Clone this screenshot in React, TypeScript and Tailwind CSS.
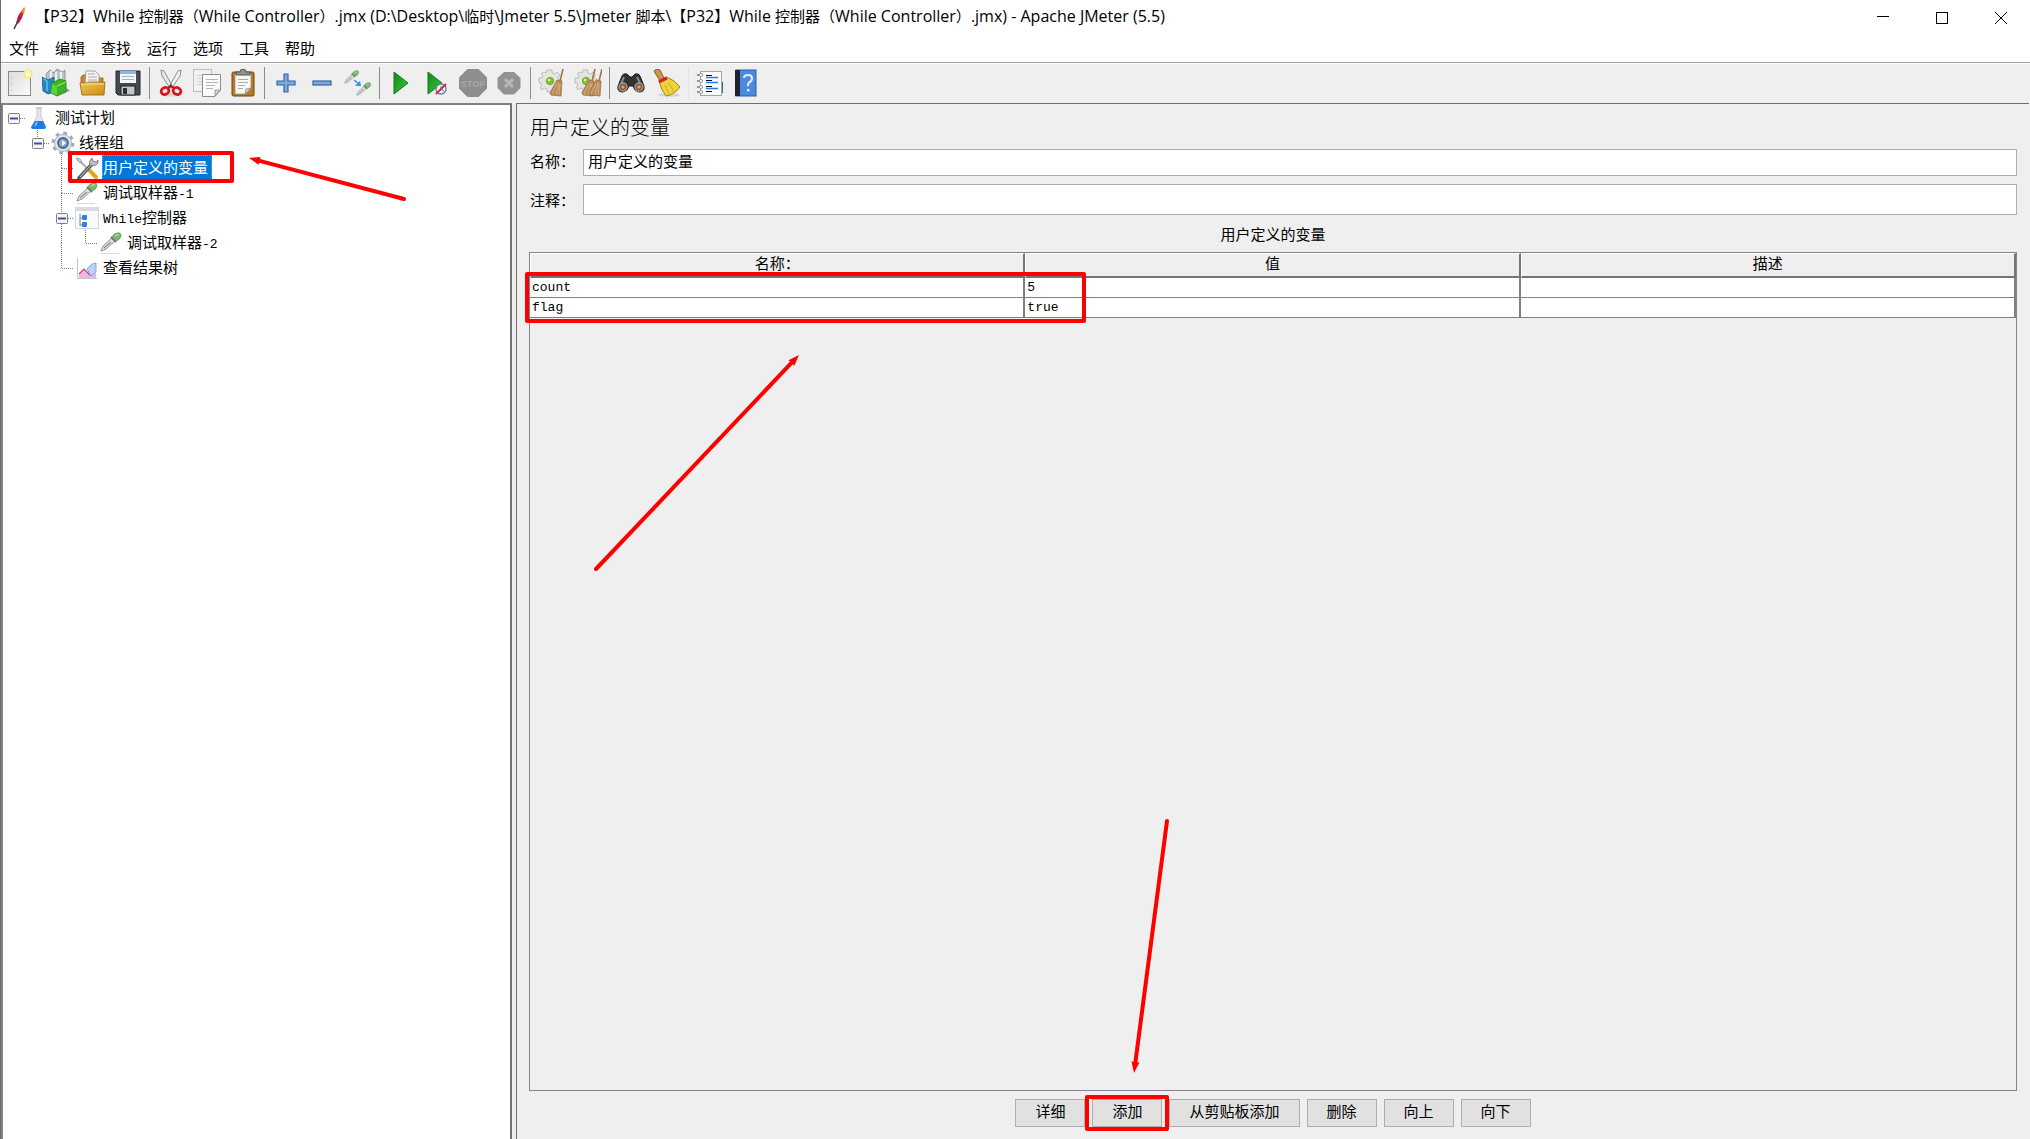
import type { ReactNode } from 'react';

const menus = ['文件', '编辑', '查找', '运行', '选项', '工具', '帮助'];

const mono = "font-['Liberation_Mono','Noto_Sans_CJK_SC',monospace]";

function Svg({ children, size = 28 }: { children: ReactNode; size?: number }) {
  return (
    <svg width={size} height={size} viewBox={`0 0 ${size} ${size}`} aria-hidden="true" className="shrink-0">
      {children}
    </svg>
  );
}

function Gradient({ id, from, to }: { id: string; from: string; to: string }) {
  return (
    <linearGradient id={id} x1="0" y1="0" x2="1" y2="1">
      <stop offset="0" stopColor={from} />
      <stop offset="1" stopColor={to} />
    </linearGradient>
  );
}

function Dropper({ x, y, scale = 1 }: { x: number; y: number; scale?: number }) {
  return (
    <g transform={`translate(${x} ${y}) scale(${scale})`}>
      <path d="M1 19 L3 14 L12 6 L15 9 L6 17 Z" fill="#e2e5e2" stroke="#8d918d" />
      <path d="M4 16 L11 10" stroke="#8a8e8a" strokeWidth="1.2" />
      <path d="M11 5 L16 10" stroke="#6d776d" strokeWidth="2" />
      <path d="M12 5 Q13 2 17 1 Q21 0 21 4 Q20 8 16 9 Z" fill="#79b56c" stroke="#5f9a56" strokeWidth=".8" />
      <path d="M15 4 Q17 2 19 3" fill="none" stroke="#c4e6ba" />
    </g>
  );
}

function BroomHead({ x }: { x: number }) {
  return (
    <g transform={`translate(${x} 0)`}>
      <path d="M12 0 L9 12" stroke="#a0713f" strokeWidth="1.6" />
      <path d="M6 11 L11 12 L10 27 L0 26 Q-2 24 0 22 Z" fill="#b98c5a" stroke="#9a7044" strokeWidth=".8" />
      <path d="M6 14 L1 25 M8 14 L5 26 M9 15 L8 26" stroke="#dcb888" strokeWidth=".8" />
    </g>
  );
}

function GearBody() {
  return (
    <g>
      <path
        d="M9 1h5v3l3 1 2-2 3 3-2 2 1 2h2v5h-3l-1 3 2 2-3 2-2-2-2 1v2H9v-3l-3-1-2 2-2-3 2-2-1-2H1v-5h3l1-2-2-2 3-2 2 1z"
        fill="#e3e5e3"
        stroke="#b0b3b0"
        strokeWidth=".8"
      />
      <circle cx="12" cy="12" r="3.6" fill="#86c42f" stroke="#6fa323" />
      <circle cx="11" cy="11" r="1.3" fill="#d3f29b" />
    </g>
  );
}

const icons = {
  new: (
    <Svg>
      <rect x="2.5" y="2.5" width="22" height="24" fill="url(#paper)" stroke="#8b8b88" />
      <path d="M5 9h1M5 15h1M5 21h1" stroke="#aaa" />
      <circle cx="22" cy="5" r="4" fill="#fff7a8" stroke="#f2e27a" strokeWidth="1.2" />
      <circle cx="22" cy="5" r="1.6" fill="#fff" />
    </Svg>
  ),
  templates: (
    <Svg>
      <path d="M4 5 L8 1 L12 4 L15 0 L20 3 L23 1 V16 H5 Z" fill="#bcc3c6" stroke="#7f888c" strokeWidth=".8" />
      <path d="M9 2v10M14 3v9M19 3v9" stroke="#eef1f2" strokeWidth="2" />
      <path d="M0 8 L6 11 L12 8 V23 L6 25 L1 22 Z" fill="#2388bd" stroke="#11618f" strokeWidth=".8" />
      <path d="M2 10 L5 12 V22" fill="none" stroke="#6fc6ec" strokeWidth="1.3" />
      <path d="M21 24 L28 22 L25 19 Z" fill="#999" />
      <path d="M10 14 L18 10 L24 12 V23 L15 27 L9 24 Z" fill="#3db223" stroke="#25801a" strokeWidth=".8" />
      <path d="M10 15 L15 17 V26 L9 24 Z" fill="#5fd13d" />
      <path d="M15 17 L24 13" stroke="#a4ef83" />
    </Svg>
  ),
  open: (
    <Svg>
      <path d="M3 8 L5 6 H10 L12 9 H25 V14 H3 Z" fill="#c98a22" stroke="#93600e" strokeWidth=".8" />
      <path d="M8 2 H17 L21 6 V15 H7 Z" fill="#f5f5f5" stroke="#8e8e8e" strokeWidth=".8" />
      <path d="M10 5h7M10 8h9M10 11h9" stroke="#a9a9a9" />
      <path d="M2 14 H9 L11 13 H27 L26 26 H4 Z" fill="url(#folder)" stroke="#a5700f" strokeWidth=".9" />
      <path d="M3 15 H26" stroke="#ffe08a" />
    </Svg>
  ),
  save: (
    <Svg>
      <path d="M2 2 H26 V26 H4 L2 24 Z" fill="#47494f" stroke="#26272b" />
      <rect x="6" y="2" width="16" height="12" fill="#f2f6fa" />
      <rect x="6" y="2" width="16" height="3" fill="#92b4d6" />
      <path d="M8 7.5h12M8 10.5h12" stroke="#9bb6cd" />
      <rect x="7" y="17" width="14" height="9" fill="#c3c6c9" stroke="#1f2023" />
      <rect x="9" y="19" width="4" height="6" fill="#2d2e32" />
    </Svg>
  ),
  cut: (
    <Svg>
      <ellipse cx="14" cy="26" rx="10" ry="1.6" fill="#d6d6d6" />
      <path d="M4 1 L7 2 L16 18 L13 19 L5 7 Z" fill="#e6e8e8" stroke="#8a8d8d" />
      <path d="M24 1 L21 2 L12 18 L15 19 L23 7 Z" fill="#f0f1f1" stroke="#8a8d8d" />
      <circle cx="14" cy="16" r="1" fill="#555" />
      <ellipse cx="8" cy="22" rx="4" ry="3.4" fill="none" stroke="#d9151f" strokeWidth="2.8" transform="rotate(-25 8 22)" />
      <ellipse cx="20" cy="22" rx="4" ry="3.4" fill="none" stroke="#d9151f" strokeWidth="2.8" transform="rotate(25 20 22)" />
      <path d="M11 19 L14 17 L17 19" fill="none" stroke="#b90e17" strokeWidth="2" />
    </Svg>
  ),
  copy: (
    <Svg>
      <rect x=".5" y=".5" width="18" height="22" fill="#f1f1f0" stroke="#bdbdbb" />
      <path d="M4 6.5h12M4 9.5h8M4 12.5h8M4 15.5h8" stroke="#cfcfcd" />
      <path d="M9.5 5.5 H27.5 V21 L22 27.5 H9.5 Z" fill="#fbfbfb" stroke="#8c8c89" />
      <path d="M13 10.5h12M13 13.5h12M13 16.5h9M13 19.5h7" stroke="#b4b4b2" />
      <path d="M27 21 H22 V27 Z" fill="#dadad8" stroke="#8c8c89" strokeWidth=".8" />
    </Svg>
  ),
  paste: (
    <Svg>
      <rect x="3" y="3" width="22" height="24" rx="1.5" fill="#b9781b" stroke="#70450a" />
      <path d="M6 5 H22 V19 L17 25 H6 Z" fill="#f7f7f6" stroke="#94918a" strokeWidth=".8" />
      <path d="M22 19 L17 20 L16 25 Z" fill="#d0d0ce" stroke="#8c8c89" strokeWidth=".8" />
      <path d="M9 10.5h10M9 13.5h10M9 16.5h7M9 19.5h5" stroke="#a9a9a7" />
      <path d="M7 6 V3 H11 Q11 0 14 0 Q17 0 17 3 H21 V6 Z" fill="#92958f" stroke="#555751" />
    </Svg>
  ),
  plus: (
    <Svg>
      <path d="M12 5h4v7h7v4h-7v7h-4v-7H5v-4h7z" fill="#7da9dc" stroke="#3465a4" strokeWidth="1.2" />
    </Svg>
  ),
  minus: (
    <Svg>
      <rect x="5" y="12" width="18" height="4" fill="#7da9dc" stroke="#3465a4" strokeWidth="1.2" />
    </Svg>
  ),
  toggle: (
    <Svg>
      <Dropper x={0} y={1} scale={0.7} />
      <Dropper x={12} y={13} scale={0.7} />
      <path d="M10 11 L15 15" stroke="#3d8cf0" strokeWidth="1.6" />
      <path d="M17 17 L11 17 L16 12 Z" fill="#3d8cf0" />
    </Svg>
  ),
  start: (
    <Svg>
      <path d="M7 3 L21 14 L7 25 Z" fill="url(#play)" stroke="#0d7a17" />
    </Svg>
  ),
  startNoPause: (
    <Svg>
      <path d="M5 3 L19 14 L5 25 Z" fill="url(#play)" stroke="#0d7a17" />
      <circle cx="18" cy="20" r="5" fill="#eef3fb" stroke="#5c7fb5" strokeWidth="1.4" />
      <path d="M18 17v3l3 2" fill="none" stroke="#666" strokeWidth="1" />
      <path d="M13 25 L23 15" stroke="#d9262c" strokeWidth="1.8" />
    </Svg>
  ),
  stop: (
    <Svg>
      <path d="M8.5 0 H19.5 L28 8.5 V19.5 L19.5 28 H8.5 L0 19.5 V8.5 Z" fill="#8e8e8e" />
      <text x="14" y="18" textAnchor="middle" fill="#a8a8a8" fontSize="9" fontWeight="700" className="font-['Liberation_Sans',sans-serif]">
        STOP
      </text>
    </Svg>
  ),
  shutdown: (
    <Svg>
      <path d="M9 3 H19 L25.5 9 V19 L19 25.5 H9 L2.5 19 V9 Z" fill="#929292" />
      <path d="M10 10 L18 18 M18 10 L10 18" stroke="#b8b8b8" strokeWidth="3" />
    </Svg>
  ),
  clear: (
    <Svg>
      <GearBody />
      <BroomHead x={13} />
    </Svg>
  ),
  clearAll: (
    <Svg>
      <GearBody />
      <BroomHead x={9} />
      <BroomHead x={16} />
    </Svg>
  ),
  search: (
    <Svg>
      <path d="M5 7 Q6 4 10 5 L13 8 H15 L18 5 Q22 4 23 7 L27 17 Q28 23 22 23 Q17 22 16 17 H12 Q11 22 6 23 Q0 23 1 17 Z" fill="#303234" stroke="#1c1d1e" />
      <path d="M7 8 L4 15 M20 8 L23 14" stroke="#85898c" strokeWidth="2" />
      <circle cx="6" cy="18" r="4" fill="#8f5a3a" stroke="#9a9a9a" strokeWidth="1.4" />
      <circle cx="22" cy="18" r="4" fill="#8f5a3a" stroke="#9a9a9a" strokeWidth="1.4" />
      <circle cx="6" cy="18" r="1.6" fill="#e0a070" />
      <circle cx="22" cy="18" r="1.6" fill="#e0a070" />
    </Svg>
  ),
  reset: (
    <Svg>
      <ellipse cx="16" cy="26" rx="11" ry="1.6" fill="#d2d2d0" />
      <path d="M1 2 Q3 -1 7 1 L11 9 L7 12 Z" fill="#d2954d" stroke="#8f5a1f" />
      <path d="M6 12 L14 8 Q23 12 27 18 Q21 26 13 27 Q8 21 6 12 Z" fill="#f0d23a" stroke="#a8860f" />
      <path d="M12 16 L16 25 M16 14 L21 23" stroke="#d0ac22" />
      <path d="M6 13 Q9 11 14 9" stroke="#d42222" strokeWidth="3" />
    </Svg>
  ),
  functions: (
    <Svg>
      <rect x="22" y="13" width="5" height="6" fill="#1d63c7" />
      <rect x="22" y="19" width="5" height="5" fill="#218b34" />
      <rect x="4.5" y="2.5" width="21" height="24" fill="#fafafa" stroke="#a5a5a3" />
      <path d="M1 6h6M1 12h6M1 18h6M1 23h6" stroke="#3c3c3c" strokeWidth="1.2" />
      <g fill="#fff" stroke="#888" strokeWidth=".8">
        <circle cx="5" cy="6" r="1.6" />
        <circle cx="5" cy="12" r="1.6" />
        <circle cx="5" cy="18" r="1.6" />
        <circle cx="5" cy="23" r="1.6" />
      </g>
      <path d="M10 6.5h6M10 11.5h6M10 17.5h6M10 22.5h6" stroke="#111" />
      <path d="M10 8.5h12M10 13.5h12M10 19.5h12" stroke="#2a7df0" strokeWidth="1.6" />
    </Svg>
  ),
  help: (
    <Svg>
      <rect x="4" y="1" width="20" height="26" fill="#4a8ae0" stroke="#2c5fa8" />
      <rect x="3" y="1" width="5" height="26" fill="#1d2430" />
      <path d="M12 9 Q12 6 16 6 Q20 6 20 9.5 Q20 12 17 13.5 Q16 14.5 16 17" fill="none" stroke="#e7f0fc" strokeWidth="2" />
      <rect x="15" y="20" width="2.4" height="2.4" fill="#e7f0fc" />
    </Svg>
  ),
};

const toolGroups: { icon: keyof typeof icons; label: string }[][] = [
  [
    { icon: 'new', label: '新建' },
    { icon: 'templates', label: '模板' },
    { icon: 'open', label: '打开' },
    { icon: 'save', label: '保存' },
  ],
  [
    { icon: 'cut', label: '剪切' },
    { icon: 'copy', label: '复制' },
    { icon: 'paste', label: '粘贴' },
  ],
  [
    { icon: 'plus', label: '全部展开' },
    { icon: 'minus', label: '全部折叠' },
    { icon: 'toggle', label: '切换' },
  ],
  [
    { icon: 'start', label: '启动' },
    { icon: 'startNoPause', label: '不停顿开始' },
    { icon: 'stop', label: '停止' },
    { icon: 'shutdown', label: '关闭' },
  ],
  [
    { icon: 'clear', label: '清除' },
    { icon: 'clearAll', label: '清除全部' },
  ],
  [
    { icon: 'search', label: '查找' },
    { icon: 'reset', label: '重置搜索' },
  ],
  [
    { icon: 'functions', label: '函数助手' },
    { icon: 'help', label: '帮助' },
  ],
];

const treeIcons = {
  plan: (
    <Svg size={24}>
      <path d="M10 2h4v8l4 10q0 2-2 2H7q-2 0-2-2l5-10z" fill="#e4e8ec" stroke="#b9bfc5" strokeWidth=".8" />
      <path d="M8 15h8l3 6q0 2-2 2H6q-2 0-2-2z" fill="#1f7be0" />
      <path d="M10 16 L8 20" stroke="#8cc4ff" strokeWidth="1.5" />
      <path d="M9 2h6" stroke="#b3b9bf" />
    </Svg>
  ),
  group: (
    <Svg size={24}>
      <circle cx="12" cy="12" r="10" fill="none" stroke="#a3a9ae" strokeWidth="3" strokeDasharray="3.6 4.25" />
      <circle cx="12" cy="12" r="8.5" fill="#e4e7ea" stroke="#a9aeb3" />
      <circle cx="12" cy="12" r="5" fill="#7fa6d4" stroke="#46658c" strokeWidth="1.8" />
      <path d="M11 9 L15 12 L11 15 Z" fill="#fff" />
    </Svg>
  ),
  vars: (
    <Svg size={24}>
      <path d="M2 3 L9 9 L13 14" stroke="#a9adb0" strokeWidth="2" fill="none" />
      <path d="M1 2 L5 3 L7 6 L4 6 Z" fill="#d9dcde" stroke="#8b8f92" strokeWidth=".8" />
      <path d="M14 14 L21 21" stroke="#e0a91a" strokeWidth="4" strokeLinecap="round" />
      <path d="M4 22 L17 8" stroke="#55595c" strokeWidth="3.6" strokeLinecap="round" />
      <path d="M15 9 Q13 5 17 2 L18 5 L21 6 L23 4 Q24 9 18 10 Z" fill="#b9bdc0" stroke="#6d7174" strokeWidth=".8" />
      <path d="M5 21 L16 9" stroke="#c9cccf" strokeWidth="1" />
    </Svg>
  ),
  dropper: (
    <Svg size={24}>
      <path d="M2 22.5h18" stroke="#d9d9d9" />
      <Dropper x={1} y={1} />
    </Svg>
  ),
  loop: (
    <Svg size={24}>
      <rect x=".5" y="1.5" width="23" height="21" fill="#f9fafb" stroke="#d3d5d7" />
      <rect x="1" y="1" width="22" height="4" fill="#d9dbdd" />
      <path d="M5 8v12M5 12h4M5 19h4" stroke="#7b8a99" fill="none" />
      <rect x="7" y="9" width="5" height="5" rx="1" fill="#2e84dc" />
      <rect x="7" y="16" width="5" height="5" rx="1" fill="#2e84dc" />
    </Svg>
  ),
  results: (
    <Svg size={24}>
      <path d="M2.5 2 V22.5 H22" fill="none" stroke="#c6c6ca" />
      <path d="M4 22 V18 L9 13 L13 17 L17 15 L21 12 V22 Z" fill="#f0b4e0" />
      <path d="M4 18 L9 13 L15 19 L18 18" fill="none" stroke="#c0417c" strokeWidth="1.2" />
      <path d="M12 13 L17 8 L21 7 V16 L16 20 Z" fill="#b9d5f5" stroke="#6f9bd8" strokeWidth=".8" />
    </Svg>
  ),
};

type Rail = 'blank' | 'bar' | 'root' | 'first' | 'tee' | 'teeOpen' | 'end';

const tree: { rails: Rail[]; icon: keyof typeof treeIcons; latin?: string; text: string; suffix?: string; selected?: boolean }[] = [
  { rails: ['root'], icon: 'plan', text: '测试计划' },
  { rails: ['blank', 'first'], icon: 'group', text: '线程组' },
  { rails: ['blank', 'blank', 'tee'], icon: 'vars', text: '用户定义的变量', selected: true },
  { rails: ['blank', 'blank', 'tee'], icon: 'dropper', text: '调试取样器', suffix: '-1' },
  { rails: ['blank', 'blank', 'teeOpen'], icon: 'loop', latin: 'While', text: '控制器' },
  { rails: ['blank', 'blank', 'bar', 'end'], icon: 'dropper', text: '调试取样器', suffix: '-2' },
  { rails: ['blank', 'blank', 'end'], icon: 'results', text: '查看结果树' },
];

function TreeRail({ kind }: { kind: Rail }) {
  const above = kind !== 'blank' && kind !== 'root';
  const below = kind === 'bar' || kind === 'tee' || kind === 'teeOpen';
  const across = kind !== 'blank' && kind !== 'bar';
  const box = kind === 'root' || kind === 'first' || kind === 'teeOpen';
  return (
    <svg width="24" height="25" viewBox="0 0 24 25" aria-hidden="true" className="shrink-0">
      <g stroke="#808080" strokeDasharray="1 1">
        {above && <path d="M10.5 0V13" />}
        {below && <path d="M10.5 13V25" />}
        {across && <path d="M11 13.5H22" />}
      </g>
      {box && (
        <>
          <rect x="5.5" y="8.5" width="11" height="10" rx="1" fill="#f4f4f4" stroke="#808080" />
          <path d="M7 13.5H15" stroke="#3355a5" strokeWidth="2" />
        </>
      )}
    </svg>
  );
}

// Red callout line; the head is placed at (x2, y2).
function Arrow({ x1, y1, x2, y2 }: { x1: number; y1: number; x2: number; y2: number }) {
  const len = Math.hypot(x2 - x1, y2 - y1);
  const ux = (x2 - x1) / len;
  const uy = (y2 - y1) / len;
  const bx = x2 - ux * 11;
  const by = y2 - uy * 11;
  return (
    <svg width="1" height="1" aria-hidden="true" className="pointer-events-none absolute left-0 top-0 z-10 overflow-visible">
      <path d={`M${x1} ${y1}L${bx} ${by}`} stroke="#ff0000" strokeWidth="4" strokeLinecap="round" />
      <polygon points={`${x2},${y2} ${bx - uy * 4},${by + ux * 4} ${bx + uy * 4},${by - ux * 4}`} fill="#ff0000" />
    </svg>
  );
}

const title =
  '【P32】While 控制器（While Controller）.jmx (D:\\Desktop\\临时\\Jmeter 5.5\\Jmeter 脚本\\【P32】While 控制器（While Controller）.jmx) - Apache JMeter (5.5)';

function TitleBar() {
  return (
    <header className="flex h-[35px] shrink-0 items-center bg-white pl-2">
      <svg width="20" height="24" viewBox="0 0 20 24" aria-hidden="true" className="shrink-0">
        <path d="M5 23 L8 17" stroke="#4b2a6b" strokeWidth="1.5" />
        <path d="M7 17 L9 10 L13 4 L15 5 L13 12 L9 18 Z" fill="#c91f37" />
        <path d="M12 6 L15 1 L16 2 L15 8 Z" fill="#f08a24" />
        <path d="M8 17 L10 11 L12 12 L10 17 Z" fill="#8e2460" />
      </svg>
      <h1 className="ml-1.5 grow truncate pb-[3px] text-[15px] leading-6">
        {/* Latin runs are set one size up from the Chinese ones */}
        {title.split(/([ -~]+)/).map((run, i) =>
          i % 2 ? (
            <span key={i} className="text-base leading-6">
              {run}
            </span>
          ) : (
            run
          ),
        )}
      </h1>
      <div className="flex h-full shrink-0">
        <button aria-label="最小化" className="flex w-[59px] items-center justify-center">
          <svg width="12" height="12" viewBox="0 0 12 12"><path d="M0 4.5H12" stroke="#000" /></svg>
        </button>
        <button aria-label="最大化" className="flex w-[59px] items-center justify-center">
          <svg width="12" height="12" viewBox="0 0 12 12"><rect x=".5" y=".5" width="11" height="11" fill="none" stroke="#000" /></svg>
        </button>
        <button aria-label="关闭" className="flex w-[59px] items-center justify-center">
          <svg width="12" height="12" viewBox="0 0 12 12"><path d="M0 0L12 12M12 0L0 12" stroke="#000" /></svg>
        </button>
      </div>
    </header>
  );
}

function Toolbar() {
  return (
    <div role="toolbar" className="flex h-10 shrink-0 items-center border-t border-white bg-[#efefef] pb-[2px] pl-px">
      {toolGroups.map((group, i) => (
        <div key={i} className="flex items-center">
          {i > 0 && <div className={`mx-[3px] h-8 w-px ${i === 6 ? 'bg-[#e4e4e4]' : 'bg-[#8c8c8c]'}`} />}
          {group.map((tool) => (
            <button key={tool.icon} aria-label={tool.label} className="flex h-8 w-9 items-center justify-center">
              {icons[tool.icon]}
            </button>
          ))}
        </div>
      ))}
    </div>
  );
}

function TestTree() {
  return (
    <nav className="w-[511px] shrink-0 border-2 border-b-0 border-[#80808a] border-r-[#70707a] bg-white">
      <ul>
        {tree.map((node) => (
          <li key={node.text + node.suffix} className="relative flex h-[25px] items-center">
            {node.rails.map((kind, i) => (
              <TreeRail key={i} kind={kind} />
            ))}
            {treeIcons[node.icon]}
            <button
              className={`ml-[3px] h-[25px] whitespace-nowrap pl-px pr-1 pb-px text-[15px] leading-6 ${
                node.selected ? 'bg-[#0078d7] text-white outline-1 -outline-offset-1 outline-dotted outline-[#ff8728]' : ''
              }`}
            >
              {node.latin && <span className={`text-[13px] ${mono}`}>{node.latin}</span>}
              {node.text}
              {node.suffix && <span className={`text-[13px] ${mono}`}>{node.suffix}</span>}
            </button>
            {node.selected && (
              <>
                <div className="pointer-events-none absolute -top-1 left-[65px] z-10 h-8 w-[166px] rounded-xs border-4 border-[#ff0000]" />
                <Arrow x1={401} y1={44} x2={246} y2={3} />
              </>
            )}
          </li>
        ))}
      </ul>
    </nav>
  );
}

const columns = ['名称：', '值', '描述'];
const variables = [
  { name: 'count', value: '5', description: '' },
  { name: 'flag', value: 'true', description: '' },
];

function VariablesTable() {
  return (
    <div className="relative grow border border-[#828290]">
      <table aria-labelledby="table-title" className="w-full table-fixed border-separate border-spacing-0">
        <thead>
          <tr>
            {columns.map((column) => (
              <th
                key={column}
                scope="col"
                className="h-[25px] border-t border-r-2 border-b-2 border-l border-t-white border-r-[#757575] border-b-[#757575] border-l-white p-0 pb-[3px] text-[15px] leading-[19px] font-normal"
              >
                {column}
              </th>
            ))}
          </tr>
        </thead>
        <tbody>
          {variables.map((row) => (
            <tr key={row.name}>
              {[row.name, row.value, row.description].map((cell, i) => (
                <td
                  key={i}
                  className={`h-5 border-r-2 border-b border-[#808080] bg-white px-[2px] py-0 text-[13px] leading-[19px] ${mono}`}
                >
                  {cell}
                </td>
              ))}
            </tr>
          ))}
        </tbody>
      </table>
      <div className="pointer-events-none absolute -left-[5px] top-[19px] z-10 h-[51px] w-[561px] rounded-xs border-4 border-[#ff0000]" />
      <Arrow x1={66} y1={316} x2={269} y2={102} />
    </div>
  );
}

const actions = ['详细', '添加', '从剪贴板添加', '删除', '向上', '向下'];

function VariablesPanel() {
  return (
    <main className="mr-px flex min-w-0 grow flex-col border-t border-l border-[#6e6e72] bg-[#efefef] pr-3 pb-3 pl-3">
      <h2 className="mt-2.5 pl-px text-[20px] leading-7 font-light">用户定义的变量</h2>
      <div className="mt-[7px] flex items-center">
        <label htmlFor="name" className="w-[54px] shrink-0 pb-1 pl-px text-[15px] leading-5">名称：</label>
        <input
          id="name"
          defaultValue="用户定义的变量"
          className="h-[27px] min-w-0 grow border border-[#abadb3] bg-white px-1 pb-1 text-[15px] leading-5"
        />
      </div>
      <div className="mt-2 flex items-center">
        <label htmlFor="comments" className="w-[54px] shrink-0 pl-px text-[15px] leading-5">注释：</label>
        <input
          id="comments"
          className="h-[31px] min-w-0 grow border border-[#abadb3] bg-white px-1 text-[15px] leading-5"
        />
      </div>
      <p id="table-title" className="mt-[9px] mb-2 text-center text-[15px] leading-5">用户定义的变量</p>
      <VariablesTable />
      <div className="mt-2 flex justify-center gap-[7px]">
        {actions.map((action) => (
          <div key={action} className="relative">
            <button className="block h-7 border border-[#adadad] bg-[#e1e1e1] px-[19px] pb-1 text-[15px] leading-5">
              {action}
            </button>
            {action === '添加' && (
              <>
                <div className="pointer-events-none absolute -inset-x-[7px] -top-1 z-10 h-9 rounded-xs border-4 border-[#ff0000]" />
                <Arrow x1={75} y1={-278} x2={42} y2={-26} />
              </>
            )}
          </div>
        ))}
      </div>
    </main>
  );
}

export default function App() {
  return (
    <div className="flex h-screen flex-col overflow-hidden border-l border-[#6e6e72] bg-[#efefef] font-['Open_Sans','Noto_Sans_CJK_SC',sans-serif] text-black">
      <svg width="0" height="0" aria-hidden="true" className="absolute">
        <defs>
          <Gradient id="paper" from="#dcdcda" to="#fbfbfb" />
          <Gradient id="folder" from="#f3c75a" to="#c98a16" />
          <Gradient id="play" from="#0c8a18" to="#3fc93d" />
        </defs>
      </svg>
      <TitleBar />
      <div role="menubar" className="flex h-7 shrink-0 items-center border-b border-[#a0a0a0] bg-white pb-px">
        {menus.map((menu) => (
          <button key={menu} role="menuitem" className="px-2 text-[15px] leading-6">
            {menu}
          </button>
        ))}
      </div>
      <Toolbar />
      <div className="flex min-h-0 grow gap-1">
        <TestTree />
        <VariablesPanel />
      </div>
    </div>
  );
}
